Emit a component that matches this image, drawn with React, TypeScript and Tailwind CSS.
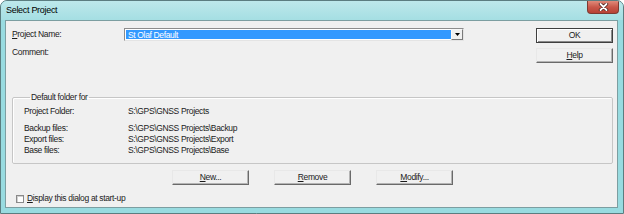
import React from "react";

const FONT = "font-['Liberation_Sans',Arial,sans-serif]";

function U({ children }: { children: React.ReactNode }) {
  return <span className="underline underline-offset-[1px]">{children}</span>;
}

function Btn({ children, isDefault = false }: { children: React.ReactNode; isDefault?: boolean }) {
  return (
    <button
      className={`w-[77px] h-[15px] flex items-center justify-center bg-[#f0f0f0] text-[8.5px] leading-none tracking-[-0.35px] text-[#1b1b1b] ${
        isDefault
          ? "border border-[#3f3f3f] shadow-[inset_1px_1px_0_#ffffff,inset_-1px_-1px_0_#8a8a8a]"
          : "border border-t-[#e8e8e8] border-l-[#e8e8e8] border-r-[#6a6a6a] border-b-[#6a6a6a] shadow-[inset_-1px_-1px_0_#b4b4b4]"
      }`}
    >
      {children}
    </button>
  );
}

export default function App() {
  const rows = [
    { label: "Backup files:", value: "S:\\GPS\\GNSS Projects\\Backup" },
    { label: "Export files:", value: "S:\\GPS\\GNSS Projects\\Export" },
    { label: "Base files:", value: "S:\\GPS\\GNSS Projects\\Base" },
  ];

  return (
    <div className={`${FONT} w-[624px] h-[214px] flex flex-col overflow-hidden rounded-t-[7px] border border-[#5b7d80] bg-[#98dbe0]`}>
      {/* Title bar */}
      <div className="h-[19px] shrink-0 flex justify-between items-start pl-[5px] pr-[4px] bg-gradient-to-b from-[#bde8eb] to-[#a5dfe3]">
        <span className="self-center text-[9px] tracking-[-0.3px] text-black leading-none">Select Project</span>
        <div className="w-[32px] h-[13px] flex items-center justify-center rounded-b-[4px] border border-t-0 border-[#7d3a32] bg-gradient-to-b from-[#e08a7a] via-[#c9584a] to-[#b74236]">
          <svg width="11" height="8" viewBox="0 0 11 8">
            <path d="M2.5 1 L8.5 7 M8.5 1 L2.5 7" stroke="#4a1f1a" strokeWidth="3.4" strokeLinecap="round" />
            <path d="M2.5 1 L8.5 7 M8.5 1 L2.5 7" stroke="#ffffff" strokeWidth="1.8" strokeLinecap="round" />
          </svg>
        </div>
      </div>

      {/* Frame body */}
      <div className="flex-1 flex pl-[4px] pr-[5px] pb-[5px]">
        <div className="flex-1 flex flex-col bg-[#f0f0f0] border border-[#7c9ea1] pl-[6px] pr-[4px] pt-[7px] text-[8.5px] tracking-[-0.35px] text-[#1b1b1b]">
          {/* Top section */}
          <div className="flex justify-between">
            <div className="flex flex-col">
              <div className="flex items-center h-[13px]">
                <span className="w-[112px] leading-[11px]">
                  <U>P</U>roject Name:
                </span>
                <div className="w-[340px] h-[13px] flex border border-t-[#8c8c8c] border-l-[#8c8c8c] border-r-[#e4e4e4] border-b-[#e4e4e4] bg-white">
                  <div className="flex-1 m-[1px] mr-0 bg-[#3399ff] text-white leading-[9px] pl-[2px] pt-[0.5px]">St Olaf Default</div>
                  <div className="w-[12px] flex items-center justify-center bg-[#f0f0f0] border border-t-[#f8f8f8] border-l-[#f8f8f8] border-r-[#7a7a7a] border-b-[#7a7a7a]">
                    <svg width="5" height="3" viewBox="0 0 5 3">
                      <path d="M0 0 H5 L2.5 3 Z" fill="#000000" />
                    </svg>
                  </div>
                </div>
              </div>
              <div className="mt-[6px] h-[11px] leading-[11px]">Comment:</div>
            </div>
            <div className="flex flex-col gap-[5px]">
              <Btn isDefault>OK</Btn>
              <Btn>
                <U>H</U>elp
              </Btn>
            </div>
          </div>

          {/* Group box */}
          <fieldset className="mt-[29px] border border-[#c6c6c6] shadow-[inset_1px_1px_0_#ffffff] rounded-[2px] pl-[11px] pt-[4px] pb-[7px]">
            <legend className="ml-[6px] px-[1px] leading-[10px] text-[#1b1b1b]">Default folder for</legend>
            <div className="flex h-[11px] leading-[11px]">
              <span className="w-[104px]">Project Folder:</span>
              <span>S:\GPS\GNSS Projects</span>
            </div>
            <div className="mt-[6px] flex flex-col">
              {rows.map((r) => (
                <div key={r.label} className="flex h-[11px] leading-[11px]">
                  <span className="w-[104px]">{r.label}</span>
                  <span>{r.value}</span>
                </div>
              ))}
            </div>
          </fieldset>

          {/* Action buttons */}
          <div className="mt-[6px] flex justify-center gap-[25px]">
            <Btn>
              <U>N</U>ew...
            </Btn>
            <Btn>
              <U>R</U>emove
            </Btn>
            <Btn>
              <U>M</U>odify...
            </Btn>
          </div>

          {/* Start-up checkbox */}
          <div className="mt-[8px] ml-[4px] flex items-center h-[11px] gap-[3px]">
            <span className="w-[8px] h-[8px] bg-white border border-[#8a8a8a] shadow-[inset_1px_1px_0_#d0d0d0]" />
            <span className="leading-[11px]">
              <U>D</U>isplay this dialog at start-up
            </span>
          </div>
        </div>
      </div>
    </div>
  );
}
